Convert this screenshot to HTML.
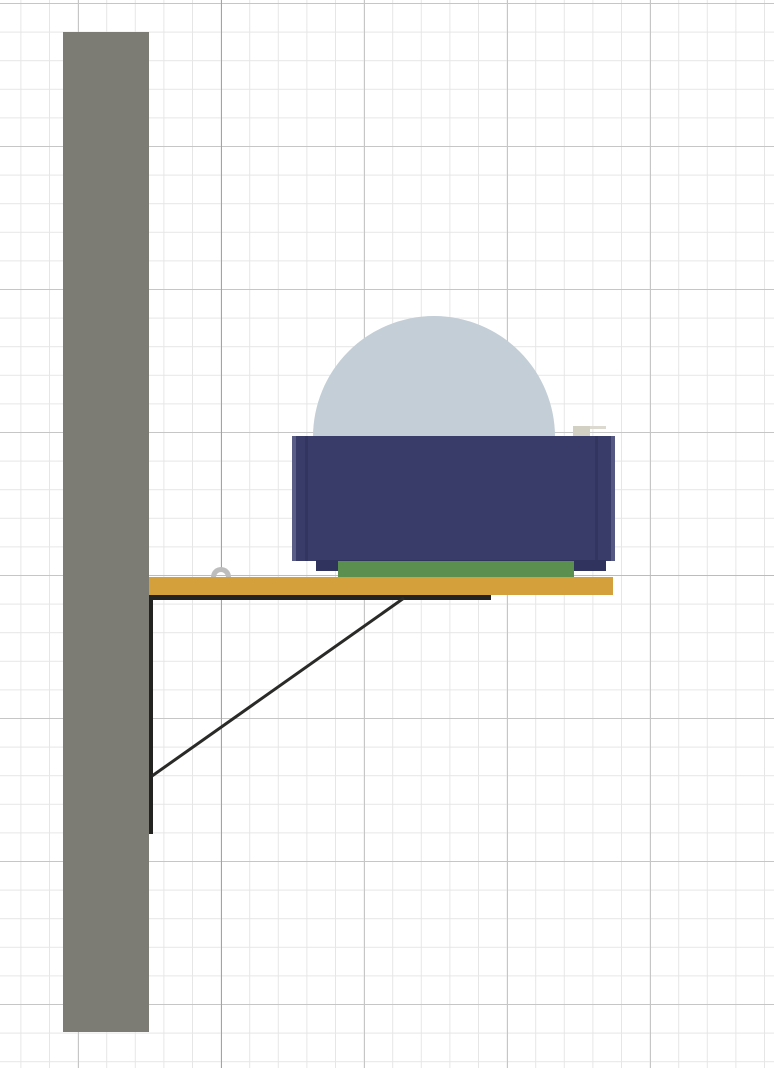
<!DOCTYPE html>
<html><head><style>
html,body{margin:0;padding:0;background:#fff;}
body{width:774px;height:1068px;position:relative;overflow:hidden;}
</style></head><body>
<svg width="774" height="1068" viewBox="0 0 774 1068" xmlns="http://www.w3.org/2000/svg" style="position:absolute;left:0;top:0">
<defs>
<pattern id="minor" x="20.4" y="3" width="28.6" height="28.6" patternUnits="userSpaceOnUse">
<path d="M0.5 0V28.6M0 0.5H28.6" stroke="#e6e6e6" stroke-width="1" fill="none"/>
</pattern>
<pattern id="major" x="78" y="3" width="143" height="143" patternUnits="userSpaceOnUse">
<path d="M0.5 0V143M0 0.5H143" stroke="#c6c6c6" stroke-width="1" fill="none"/>
</pattern>
</defs>
<rect width="774" height="1068" fill="url(#minor)"/>
<rect width="774" height="1068" fill="url(#major)"/>
<line x1="221.5" y1="0" x2="221.5" y2="1068" stroke="#9a9ae6" stroke-width="1"/>
<line x1="149" y1="575.5" x2="774" y2="575.5" stroke="#8fe07a" stroke-width="1"/>
<!-- wall -->
<rect x="63" y="32" width="86" height="1000" fill="#7d7c74"/>
<!-- dome -->
<path d="M313 437 A121 121 0 0 1 555 437 Z" fill="#c3ced6"/>
<!-- cap -->
<rect x="573" y="426" width="33" height="3" fill="#dcdad0"/>
<rect x="573" y="426" width="17" height="11" fill="#d2d0c3"/>
<!-- box -->
<rect x="292" y="436" width="323" height="125" fill="#393c69"/>
<rect x="292" y="436" width="4" height="125" fill="#5a5d85"/>
<rect x="305" y="436" width="3" height="125" fill="#32355e"/>
<rect x="595" y="436" width="3" height="125" fill="#32355e"/>
<rect x="611" y="436" width="4" height="125" fill="#555882"/>
<rect x="316" y="560" width="290" height="11" fill="#30335e"/>
<!-- pcb -->
<rect x="338" y="561" width="236" height="16" fill="#5a8f50"/>
<!-- bolt -->
<path d="M211 577 A10 10 0 0 1 231 577 Z" fill="#bdbdbd"/>
<circle cx="221" cy="577" r="5" fill="#fff"/>
<line x1="149" y1="575.5" x2="338" y2="575.5" stroke="#8fe07a" stroke-width="1"/>
<!-- shelf -->
<rect x="149" y="577" width="464" height="18" fill="#d4a03c"/>
<!-- bracket -->
<rect x="149" y="595" width="342" height="5" fill="#232321"/>
<rect x="149" y="595" width="4" height="239" fill="#232321"/>
<line x1="152" y1="776" x2="404" y2="598" stroke="#2a2a28" stroke-width="3"/>
</svg>
</body></html>
